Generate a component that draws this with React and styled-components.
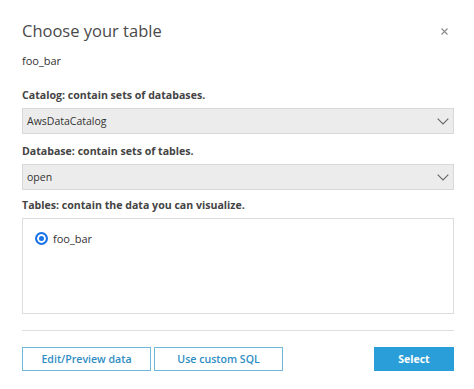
import React, { useState } from 'react';
import styled, { createGlobalStyle } from 'styled-components';

const GlobalStyle = createGlobalStyle`
  body {
    margin: 0;
    background: #ffffff;
    font-family: "Open Sans", "Noto Sans", sans-serif;
    color: #444444;
  }
`;

const App = () => {
  const [table, setTable] = useState('foo_bar');

  return (
    <>
      <GlobalStyle />
      <Dialog>
        <Header>
          <Title>Choose your table</Title>
          <CloseButton aria-label="Close">
            <svg width="7" height="7" viewBox="0 0 7 7">
              <path d="M0.5 0.5 L6.5 6.5 M6.5 0.5 L0.5 6.5" stroke="#888" strokeWidth="1.1" />
            </svg>
          </CloseButton>
        </Header>
        <Subtitle>foo_bar</Subtitle>

        <Field $gap="19px">
          <Label>Catalog: contain sets of databases.</Label>
          <SelectBox>
            <span>AwsDataCatalog</span>
            <Chevron />
          </SelectBox>
        </Field>

        <Field $gap="9px">
          <Label>Database: contain sets of tables.</Label>
          <SelectBox>
            <span>open</span>
            <Chevron />
          </SelectBox>
        </Field>

        <Field $gap="7px">
          <Label>Tables: contain the data you can visualize.</Label>
          <TableList>
            <RadioRow onClick={() => setTable('foo_bar')}>
              <Radio checked={table === 'foo_bar'} />
              <span>foo_bar</span>
            </RadioRow>
          </TableList>
        </Field>

        <Divider />

        <Footer>
          <OutlineButton $width="129px">Edit/Preview data</OutlineButton>
          <OutlineButton $width="129px">Use custom SQL</OutlineButton>
          <Spacer />
          <PrimaryButton>Select</PrimaryButton>
        </Footer>
      </Dialog>
    </>
  );
};

const Chevron = () => (
  <svg width="12" height="7" viewBox="0 0 12 7">
    <path d="M0.7 0.7 L6 6 L11.3 0.7" fill="none" stroke="#666" strokeWidth="1.1" />
  </svg>
);

const Dialog = styled.div`
  width: 474px;
  box-sizing: border-box;
  padding: 18px 20px 18px 22px;
`;

const Header = styled.div`
  display: flex;
  justify-content: space-between;
  align-items: center;
`;

const Title = styled.h2`
  margin: 0;
  font-size: 16.5px;
  font-weight: 400;
  color: #4a4a4a;
  line-height: 26px;
`;

const CloseButton = styled.button`
  border: none;
  background: none;
  padding: 0;
  margin-right: 6px;
  display: flex;
`;

const Subtitle = styled.div`
  font-size: 11px;
  margin-top: 9px;
  color: #333;
`;

const Field = styled.div`
  margin-top: ${(p) => p.$gap};
`;

const Label = styled.div`
  font-size: 10.6px;
  font-weight: 700;
  color: #444;
  margin-bottom: 5px;
  line-height: 16px;
`;

const SelectBox = styled.div`
  height: 26px;
  box-sizing: border-box;
  display: flex;
  align-items: center;
  justify-content: space-between;
  padding: 0 4px;
  background: #ececec;
  border: 1px solid #d8d8d8;
  font-size: 10.5px;
  color: #333;
`;

const TableList = styled.div`
  height: 96px;
  box-sizing: border-box;
  border: 1px solid #dcdcdc;
  background: #fff;
  padding: 12px 12px;
`;

const RadioRow = styled.label`
  display: flex;
  align-items: center;
  gap: 5px;
  font-size: 11px;
  color: #333;
`;

const Radio = styled.span`
  width: 13px;
  height: 13px;
  box-sizing: border-box;
  border-radius: 50%;
  border: 2px solid ${(p) => (p.checked ? '#1a73e8' : '#999')};
  background: ${(p) => (p.checked ? '#1a73e8' : '#fff')};
  box-shadow: inset 0 0 0 2px #fff;
`;

const Divider = styled.hr`
  border: none;
  border-top: 1px solid #dddddd;
  margin: 16px 0 16px;
`;

const Footer = styled.div`
  display: flex;
  gap: 3px;
`;

const Spacer = styled.div`
  flex: 1;
`;

const OutlineButton = styled.button`
  width: ${(p) => p.$width};
  height: 24px;
  border: 1px solid #6fb8dc;
  background: #fff;
  color: #2f8dc4;
  font-family: inherit;
  font-size: 10.6px;
  font-weight: 600;
`;

const PrimaryButton = styled.button`
  width: 80px;
  height: 24px;
  border: none;
  background: #2a9ed8;
  color: #fff;
  font-family: inherit;
  font-size: 10.5px;
  font-weight: 700;
`;

export default App;
